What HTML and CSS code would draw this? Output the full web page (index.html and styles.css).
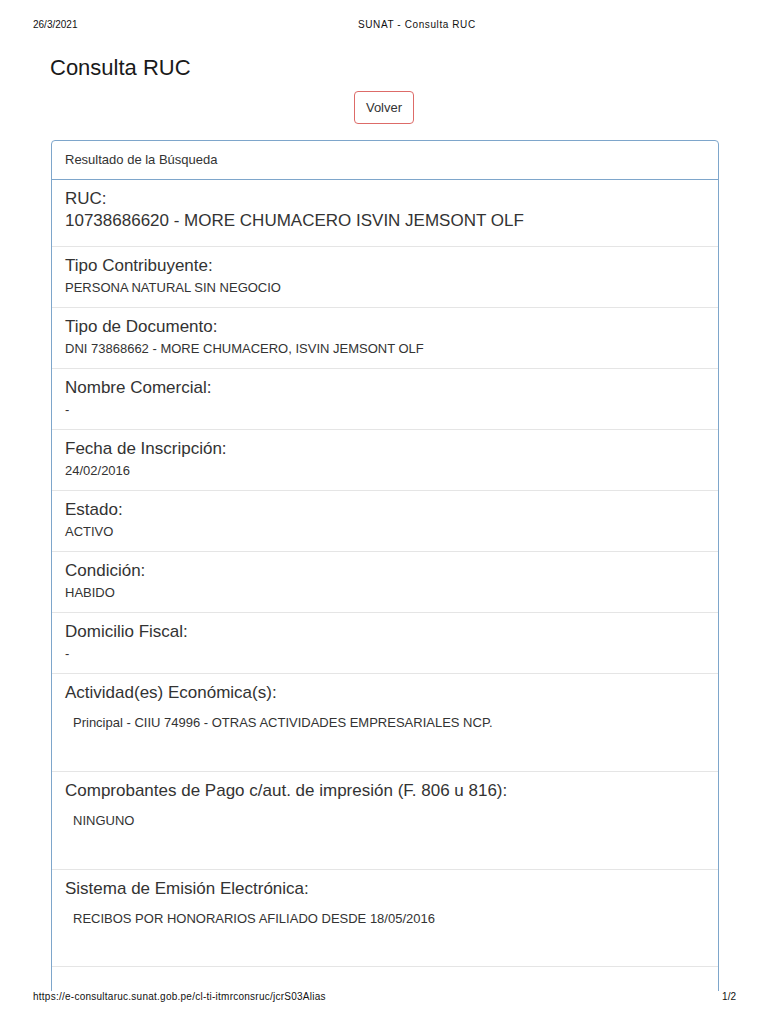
FILE: index.html
```html
<!DOCTYPE html>
<html lang="es">
<head>
<meta charset="utf-8">
<title>SUNAT - Consulta RUC</title>
<link rel="stylesheet" href="styles.css">
</head>
<body>
<div class="page">
  <header class="print-header">
    <span class="print-date">26/3/2021</span>
    <span class="print-title">SUNAT - Consulta RUC</span>
  </header>
  <main class="content">
    <h1 class="title">Consulta RUC</h1>
    <div class="actions">
      <button class="btn-volver" type="button">Volver</button>
    </div>
    <section class="panel">
      <div class="panel-heading">Resultado de la Búsqueda</div>
      <div class="row row-first">
        <div class="label">RUC:</div>
        <div class="value value-big">10738686620 - MORE CHUMACERO ISVIN JEMSONT OLF</div>
      </div>
      <div class="row">
        <div class="label">Tipo Contribuyente:</div>
        <div class="value">PERSONA NATURAL SIN NEGOCIO</div>
      </div>
      <div class="row">
        <div class="label">Tipo de Documento:</div>
        <div class="value">DNI 73868662 - MORE CHUMACERO, ISVIN JEMSONT OLF</div>
      </div>
      <div class="row">
        <div class="label">Nombre Comercial:</div>
        <div class="value">-</div>
      </div>
      <div class="row">
        <div class="label">Fecha de Inscripción:</div>
        <div class="value">24/02/2016</div>
      </div>
      <div class="row">
        <div class="label">Estado:</div>
        <div class="value">ACTIVO</div>
      </div>
      <div class="row">
        <div class="label">Condición:</div>
        <div class="value">HABIDO</div>
      </div>
      <div class="row">
        <div class="label">Domicilio Fiscal:</div>
        <div class="value">-</div>
      </div>
      <div class="row">
        <div class="label">Actividad(es) Económica(s):</div>
        <div class="list"><div class="list-item">Principal - CIIU 74996 - OTRAS ACTIVIDADES EMPRESARIALES NCP.</div></div>
      </div>
      <div class="row">
        <div class="label">Comprobantes de Pago c/aut. de impresión (F. 806 u 816):</div>
        <div class="list"><div class="list-item">NINGUNO</div></div>
      </div>
      <div class="row row-short">
        <div class="label">Sistema de Emisión Electrónica:</div>
        <div class="list"><div class="list-item">RECIBOS POR HONORARIOS AFILIADO DESDE 18/05/2016</div></div>
      </div>
      <div class="row row-empty"></div>
    </section>
  </main>
  <footer class="print-footer">
    <span class="print-url">https://e-consultaruc.sunat.gob.pe/cl-ti-itmrconsruc/jcrS03Alias</span>
    <span class="print-page">1/2</span>
  </footer>
</div>
</body>
</html>
```

FILE: styles.css
```css
html, body {
  margin: 0;
  padding: 0;
  background: #ffffff;
}

body {
  font-family: "Liberation Sans", Arial, sans-serif;
  color: #333333;
}

.page {
  width: 768px;
  height: 1024px;
  display: flex;
  flex-direction: column;
  overflow: hidden;
}

.print-header {
  display: grid;
  grid-template-columns: 325px auto;
  padding: 19px 33px 0 33px;
  font-size: 10px;
  line-height: 12px;
  color: #111111;
}

.print-title {
  letter-spacing: 0.6px;
}

.content {
  flex: 1;
  min-height: 0;
  overflow: hidden;
  padding: 0 49px 0 51px;
}

.title {
  margin: 25px 0 0 -1px;
  font-size: 22px;
  line-height: 24px;
  font-weight: normal;
  color: #1a1a1a;
}

.actions {
  display: flex;
  justify-content: center;
  margin-top: 11px;
  padding-right: 2px;
}

.btn-volver {
  width: 60px;
  height: 33px;
  padding: 0;
  background: #ffffff;
  border: 1px solid #dd6b68;
  border-radius: 4px;
  font-family: "Liberation Sans", Arial, sans-serif;
  font-size: 13px;
  color: #333333;
}

.panel {
  margin-top: 16px;
  border: 1px solid #7ea6cb;
  border-radius: 4px;
}

.panel-heading {
  padding: 10px 13px 11px 13px;
  font-size: 13px;
  line-height: 17px;
  border-bottom: 1px solid #7ea6cb;
}

.row {
  padding: 8px 13px 11px 13px;
  border-top: 1px solid #e5e5e5;
}

.row-first {
  border-top: none;
  padding-bottom: 14px;
}

.row-short {
  padding-bottom: 10px;
}

.row-empty {
  height: 60px;
  padding: 0;
}

.label {
  font-size: 17px;
  line-height: 22px;
}

.value {
  margin-top: 2px;
  font-size: 13px;
  line-height: 17px;
}

.value-big {
  margin-top: 0;
  font-size: 17px;
  line-height: 22px;
}

.list {
  height: 56px;
  box-sizing: border-box;
  padding: 10px 8px 0 8px;
}

.list-item {
  font-size: 13px;
  line-height: 17px;
}

.print-footer {
  display: flex;
  justify-content: space-between;
  padding: 0 32px 21px 33px;
  font-size: 10px;
  line-height: 12px;
  color: #111111;
}

.print-url {
  letter-spacing: 0.25px;
}
```
